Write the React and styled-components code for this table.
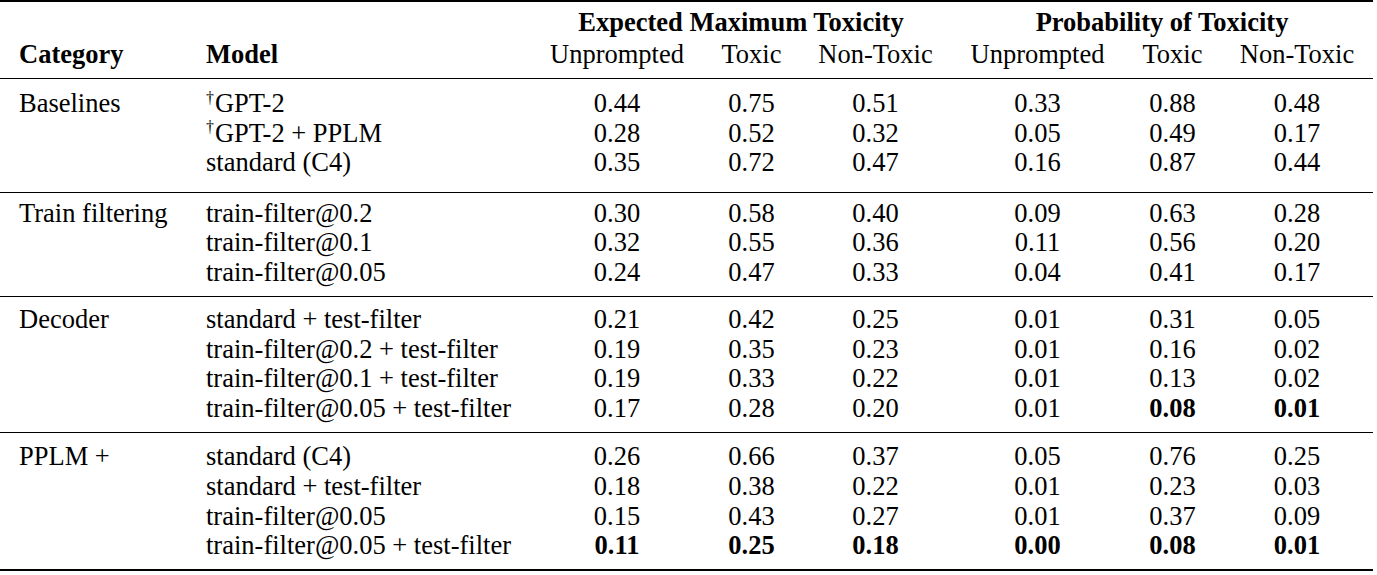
import React from "react";
import styled, { createGlobalStyle } from "styled-components";

const GlobalStyle = createGlobalStyle`
  html, body {
    margin: 0;
    padding: 0;
    background: #ffffff;
  }
  body {
    font-family: "Liberation Serif", "Times New Roman", serif;
    color: #000000;
  }
`;

const Table = styled.table`
  width: 1373px;
  table-layout: fixed;
  border-collapse: separate;
  border-spacing: 0;
  border-top: 2px solid #000;
  border-bottom: 2px solid #000;
  font-family: "Liberation Serif", "Times New Roman", serif;
  font-size: 26.5px;
  line-height: 29.6px;
  color: #000;
`;

const Col = styled.col`
  width: ${(props) => props.$w}px;
`;

const Head = styled.thead`
  tr:first-child th {
    padding-top: 6px;
  }
  tr:last-child th {
    padding-bottom: 8.8px;
    border-bottom: 1px solid #000;
  }
`;

const HeadCell = styled.th`
  padding-left: ${(props) => (props.$left ? "19px" : "0")};
  padding-right: 0;
  vertical-align: baseline;
  font-weight: ${(props) => (props.$bold ? 700 : 400)};
  text-align: ${(props) => (props.$left ? "left" : "center")};
  white-space: nowrap;
`;

const Group = styled.tbody`
  tr:first-child td {
    padding-top: ${(props) => props.$top}px;
  }
  tr:last-child td {
    padding-bottom: ${(props) => props.$bottom}px;
    border-bottom: ${(props) => (props.$last ? "0" : "1px solid #000")};
  }
`;

const TextCell = styled.td`
  padding: 0 18px 0 19px;
  vertical-align: baseline;
  text-align: left;
  white-space: nowrap;
`;

const NumCell = styled.td`
  padding: 0;
  vertical-align: baseline;
  text-align: center;
  font-weight: ${(props) => (props.$bold ? 700 : 400)};
`;

const Dagger = styled.span`
  font-size: 0.6em;
  line-height: 0;
  vertical-align: 0.58em;
  margin-right: 1px;
`;

const groups = [
  {
    name: "Baselines",
    top: 10,
    bottom: 14,
    rows: [
      { model: "GPT-2", dagger: true, vals: ["0.44", "0.75", "0.51", "0.33", "0.88", "0.48"] },
      { model: "GPT-2 + PPLM", dagger: true, vals: ["0.28", "0.52", "0.32", "0.05", "0.49", "0.17"] },
      { model: "standard (C4)", vals: ["0.35", "0.72", "0.47", "0.16", "0.87", "0.44"] },
    ],
  },
  {
    name: "Train filtering",
    top: 6,
    bottom: 8.5,
    rows: [
      { model: "train-filter@0.2", vals: ["0.30", "0.58", "0.40", "0.09", "0.63", "0.28"] },
      { model: "train-filter@0.1", vals: ["0.32", "0.55", "0.36", "0.11", "0.56", "0.20"] },
      { model: "train-filter@0.05", vals: ["0.24", "0.47", "0.33", "0.04", "0.41", "0.17"] },
    ],
  },
  {
    name: "Decoder",
    top: 8,
    bottom: 9,
    rows: [
      { model: "standard + test-filter", vals: ["0.21", "0.42", "0.25", "0.01", "0.31", "0.05"] },
      { model: "train-filter@0.2 + test-filter", vals: ["0.19", "0.35", "0.23", "0.01", "0.16", "0.02"] },
      { model: "train-filter@0.1 + test-filter", vals: ["0.19", "0.33", "0.22", "0.01", "0.13", "0.02"] },
      { model: "train-filter@0.05 + test-filter", vals: ["0.17", "0.28", "0.20", "0.01", "0.08", "0.01"], bold: [4, 5] },
    ],
  },
  {
    name: "PPLM +",
    top: 9,
    bottom: 8,
    last: true,
    rows: [
      { model: "standard (C4)", vals: ["0.26", "0.66", "0.37", "0.05", "0.76", "0.25"] },
      { model: "standard + test-filter", vals: ["0.18", "0.38", "0.22", "0.01", "0.23", "0.03"] },
      { model: "train-filter@0.05", vals: ["0.15", "0.43", "0.27", "0.01", "0.37", "0.09"] },
      { model: "train-filter@0.05 + test-filter", vals: ["0.11", "0.25", "0.18", "0.00", "0.08", "0.01"], bold: [0, 1, 2, 3, 4, 5] },
    ],
  },
];

const widths = [187, 344, 172, 97, 151, 173, 97, 152];
const subHeads = ["Unprompted", "Toxic", "Non-Toxic", "Unprompted", "Toxic", "Non-Toxic"];

export default function App() {
  return (
    <>
      <GlobalStyle />
      <Table>
        <colgroup>
          {widths.map((w, i) => (
            <Col key={i} $w={w} />
          ))}
        </colgroup>
        <Head>
          <tr>
            <HeadCell />
            <HeadCell />
            <HeadCell colSpan={3} $bold>Expected Maximum Toxicity</HeadCell>
            <HeadCell colSpan={3} $bold>Probability of Toxicity</HeadCell>
          </tr>
          <tr>
            <HeadCell $bold $left>Category</HeadCell>
            <HeadCell $bold $left>Model</HeadCell>
            {subHeads.map((h, i) => (
              <HeadCell key={i}>{h}</HeadCell>
            ))}
          </tr>
        </Head>
        {groups.map((g) => (
          <Group key={g.name} $top={g.top} $bottom={g.bottom} $last={g.last}>
            {g.rows.map((r, ri) => (
              <tr key={ri}>
                <TextCell>{ri === 0 ? g.name : ""}</TextCell>
                <TextCell>
                  {r.dagger && <Dagger>†</Dagger>}
                  {r.model}
                </TextCell>
                {r.vals.map((v, vi) => (
                  <NumCell key={vi} $bold={r.bold && r.bold.includes(vi)}>
                    {v}
                  </NumCell>
                ))}
              </tr>
            ))}
          </Group>
        ))}
      </Table>
    </>
  );
}
